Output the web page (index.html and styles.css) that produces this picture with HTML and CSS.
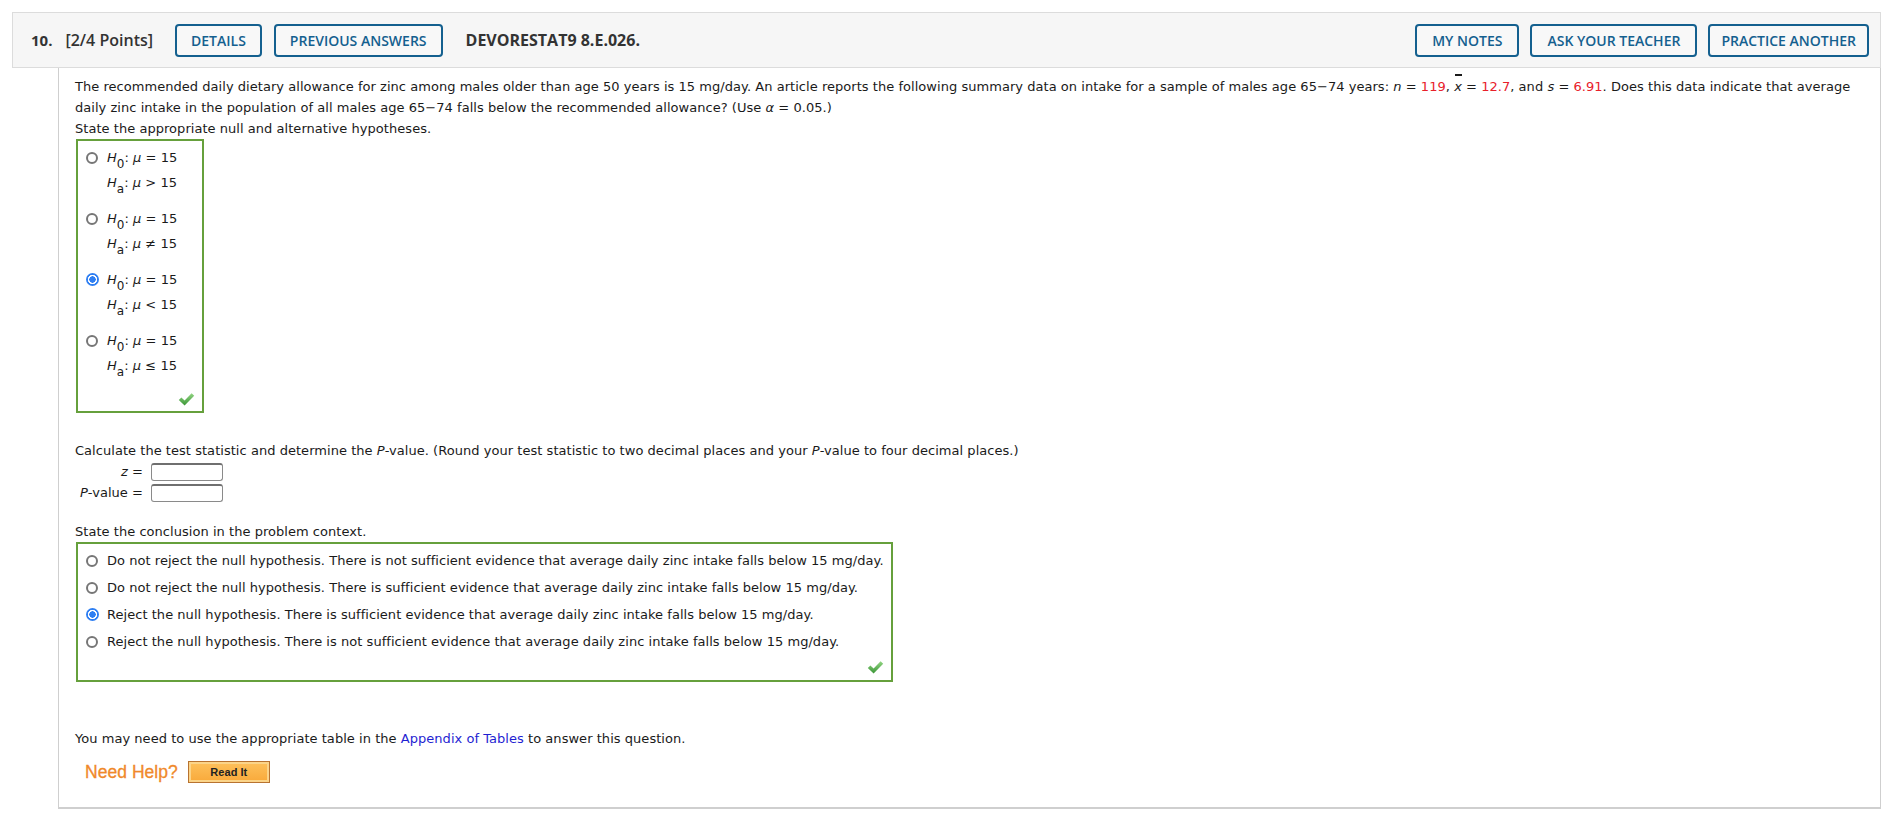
FILE: index.html
```html
<!DOCTYPE html>
<html>
<head>
<meta charset="utf-8">
<link rel="stylesheet" href="styles.css">
</head>
<body>
<div class="question">
  <div class="qhead">
    <div class="qhead-left">
      <span class="qnum">10.</span>
      <span class="qpts">[2/4 Points]</span>
      <span class="btn">DETAILS</span>
      <span class="btn">PREVIOUS ANSWERS</span>
      <span class="qcode">DEVORESTAT9 8.E.026.</span>
    </div>
    <div class="qhead-right">
      <span class="btn b-notes">MY NOTES</span>
      <span class="btn b-ask">ASK YOUR TEACHER</span>
      <span class="btn b-practice">PRACTICE ANOTHER</span>
    </div>
  </div>
  <div class="qbody">
    <p class="txt">The recommended daily dietary allowance for zinc among males older than age 50 years is 15 mg/day. An article reports the following summary data on intake for a sample of males age 65&minus;74 years: <i>n</i> = <span class="red">119</span>, <i class="xbar">x</i> = <span class="red">12.7</span>, and <i>s</i> = <span class="red">6.91</span>. Does this data indicate that average <span>daily zinc intake in the population of all males age 65&minus;74 falls below the recommended allowance? (Use </span><i>&alpha;</i> = 0.05.)</p>
    <p class="txt">State the appropriate null and alternative hypotheses.</p>
    <div class="answer hyp">
      <div class="hgroup">
        <div class="hrow"><span class="radio"></span><span><i>H</i><sub>0</sub>: <i>&mu;</i> = 15</span></div>
        <div class="hrow ha"><span><i>H</i><sub>a</sub>: <i>&mu;</i> &gt; 15</span></div>
      </div>
      <div class="hgroup">
        <div class="hrow"><span class="radio"></span><span><i>H</i><sub>0</sub>: <i>&mu;</i> = 15</span></div>
        <div class="hrow ha"><span><i>H</i><sub>a</sub>: <i>&mu;</i> &ne; 15</span></div>
      </div>
      <div class="hgroup">
        <div class="hrow"><span class="radio on"></span><span><i>H</i><sub>0</sub>: <i>&mu;</i> = 15</span></div>
        <div class="hrow ha"><span><i>H</i><sub>a</sub>: <i>&mu;</i> &lt; 15</span></div>
      </div>
      <div class="hgroup">
        <div class="hrow"><span class="radio"></span><span><i>H</i><sub>0</sub>: <i>&mu;</i> = 15</span></div>
        <div class="hrow ha"><span><i>H</i><sub>a</sub>: <i>&mu;</i> &le; 15</span></div>
      </div>
      <div class="checkrow">
        <svg class="check" width="17" height="14" viewBox="0 0 17 14"><defs><linearGradient id="g1" x1="0" y1="0" x2="0" y2="1"><stop offset="0" stop-color="#94d684"/><stop offset="1" stop-color="#3b9637"/></linearGradient></defs><path d="M0.8 8 L3.4 5.4 L6.6 8.4 L13.6 1.2 L16.2 3.8 L6.6 13.4 Z" fill="url(#g1)"/></svg>
      </div>
    </div>

    <p class="txt calc">Calculate the test statistic and determine the <i>P</i>-value. (Round your test statistic to two decimal places and your <i>P</i>-value to four decimal places.)</p>
    <div class="field"><span class="flabel"><i>z</i> =</span><span class="input"></span></div>
    <div class="field"><span class="flabel"><i>P</i>-value =</span><span class="input"></span></div>

    <p class="txt concl-label">State the conclusion in the problem context.</p>
    <div class="answer concl">
      <div class="crow"><span class="radio"></span><span>Do not reject the null hypothesis. There is not sufficient evidence that average daily zinc intake falls below 15 mg/day.</span></div>
      <div class="crow"><span class="radio"></span><span>Do not reject the null hypothesis. There is sufficient evidence that average daily zinc intake falls below 15 mg/day.</span></div>
      <div class="crow"><span class="radio on"></span><span>Reject the null hypothesis. There is sufficient evidence that average daily zinc intake falls below 15 mg/day.</span></div>
      <div class="crow"><span class="radio"></span><span>Reject the null hypothesis. There is not sufficient evidence that average daily zinc intake falls below 15 mg/day.</span></div>
      <div class="checkrow c2">
        <svg class="check" width="17" height="14" viewBox="0 0 17 14"><defs><linearGradient id="g2" x1="0" y1="0" x2="0" y2="1"><stop offset="0" stop-color="#94d684"/><stop offset="1" stop-color="#3b9637"/></linearGradient></defs><path d="M0.8 8 L3.4 5.4 L6.6 8.4 L13.6 1.2 L16.2 3.8 L6.6 13.4 Z" fill="url(#g2)"/></svg>
      </div>
    </div>

    <p class="txt appendix">You may need to use the appropriate table in the <a class="link">Appendix of Tables</a> to answer this question.</p>
    <div class="help">
      <span class="needhelp">Need Help?</span>
      <span class="readit">Read It</span>
    </div>
  </div>
</div>
</body>
</html>
```

FILE: styles.css
```css
html, body {
  margin: 0;
  padding: 0;
  background: #ffffff;
}
.question {
  margin: 12px 0 0 12px;
  width: 1869px;
}
.qhead {
  height: 54px;
  background: #f6f6f6;
  border: 1px solid #dcdcdc;
  display: flex;
  align-items: center;
  justify-content: space-between;
  padding: 0 11px 0 18px;
  font-family: "Open Sans", sans-serif;
  color: #333;
}
.qhead-left, .qhead-right {
  display: flex;
  align-items: center;
}
.qnum {
  font-weight: 700;
  font-size: 15px;
  margin-right: 13px;
}
.qpts {
  font-weight: 600;
  font-size: 16px;
  margin-right: 22px;
}
.btn {
  display: inline-flex;
  align-items: center;
  height: 29px;
  padding: 0 14px;
  border: 2px solid #14608f;
  border-radius: 4px;
  color: #14608f;
  font-weight: 600;
  font-size: 14px;
  margin-right: 12px;
  background: #f8f8f8;
}
.qhead-right .btn {
  margin-right: 0;
  margin-left: 11px;
}
.qhead-right .b-notes {
  padding: 0 15px;
}
.qhead-right .b-ask {
  padding: 0 15px;
}
.qhead-right .b-practice {
  padding: 0 11px;
}
.qcode {
  font-weight: 700;
  font-size: 16px;
  margin-left: 11px;
}
.qbody {
  margin-left: 46px;
  border-left: 1px solid #cfcfcf;
  border-right: 1px solid #cfcfcf;
  border-bottom: 2px solid #cfcfcf;
  padding: 8px 16px 24px 16px;
  font-family: "DejaVu Sans", Verdana, sans-serif;
  font-size: 13px;
  letter-spacing: 0.04px;
  color: #1a1a1a;
}
.txt {
  margin: 0;
  line-height: 21px;
}
.red { color: #e8202a; }
.xbar {
  position: relative;
}
.xbar::before {
  content: "";
  position: absolute;
  left: 1px;
  top: -5px;
  width: 7px;
  height: 2px;
  background: #1a1a1a;
}
.answer {
  border: 2px solid #66a03c;
  margin-left: 1px;
}
.hyp {
  width: 124px;
  padding-top: 4px;
}
.hgroup {
  padding-bottom: 11px;
}
.hrow {
  display: flex;
  align-items: center;
  height: 25px;
  padding-left: 8px;
}
.hrow.ha {
  padding-left: 29px;
}
.radio {
  width: 12px;
  height: 12px;
  box-sizing: border-box;
  border: 2px solid #767676;
  border-radius: 50%;
  background: #fff;
  margin-right: 9px;
  flex: none;
}
.radio.on {
  border: none;
  width: 13px;
  height: 13px;
  margin-right: 8px;
  background: radial-gradient(circle, #2f7ff2 0 3px, #ffffff 3.4px 4.4px, #2f7ff2 4.8px);
}
sub {
  font-size: 12px;
  vertical-align: -6px;
  line-height: 0;
}
.checkrow {
  display: flex;
  justify-content: flex-end;
  align-items: center;
  height: 20px;
  padding: 0 7px 2px 0;
}
.checkrow.c2 {
  height: 24px;
  padding: 0 7px 1px 0;
}
.calc {
  margin-top: 27px;
}
.field {
  display: flex;
  align-items: center;
  height: 21px;
}
.flabel {
  width: 68px;
  text-align: right;
  margin-right: 8px;
}
.input {
  width: 70px;
  height: 15px;
  border: 1px solid #8a8a8a;
  border-top: 2px solid #6f6f6f;
  border-radius: 3px;
  background: #fff;
  box-sizing: content-box;
}
.concl-label {
  margin-top: 19px;
  line-height: 20px;
}
.concl {
  width: 813px;
  padding-top: 3px;
}
.crow {
  display: flex;
  align-items: center;
  height: 27px;
  padding-left: 8px;
}
.appendix {
  margin-top: 46px;
}
.link {
  color: #1f1fd2;
  text-decoration: none;
}
.help {
  display: flex;
  align-items: center;
  height: 22px;
  margin-top: 12px;
  padding-left: 10px;
}
.needhelp {
  font-family: "Liberation Sans", Arial, sans-serif;
  font-size: 17.5px;
  color: #f0892a;
  margin-right: 10px;
  -webkit-text-stroke: 0.3px #f0892a;
}
.readit {
  display: inline-flex;
  align-items: center;
  justify-content: center;
  box-sizing: border-box;
  width: 82px;
  height: 22px;
  border: 1px solid #b87330;
  background: linear-gradient(#fdc15c, #f9a93a);
  box-shadow: inset 0 0 0 2px #fbd489;
  font-family: "Liberation Sans", Arial, sans-serif;
  font-weight: 700;
  font-size: 11px;
  color: #222;
}
```
